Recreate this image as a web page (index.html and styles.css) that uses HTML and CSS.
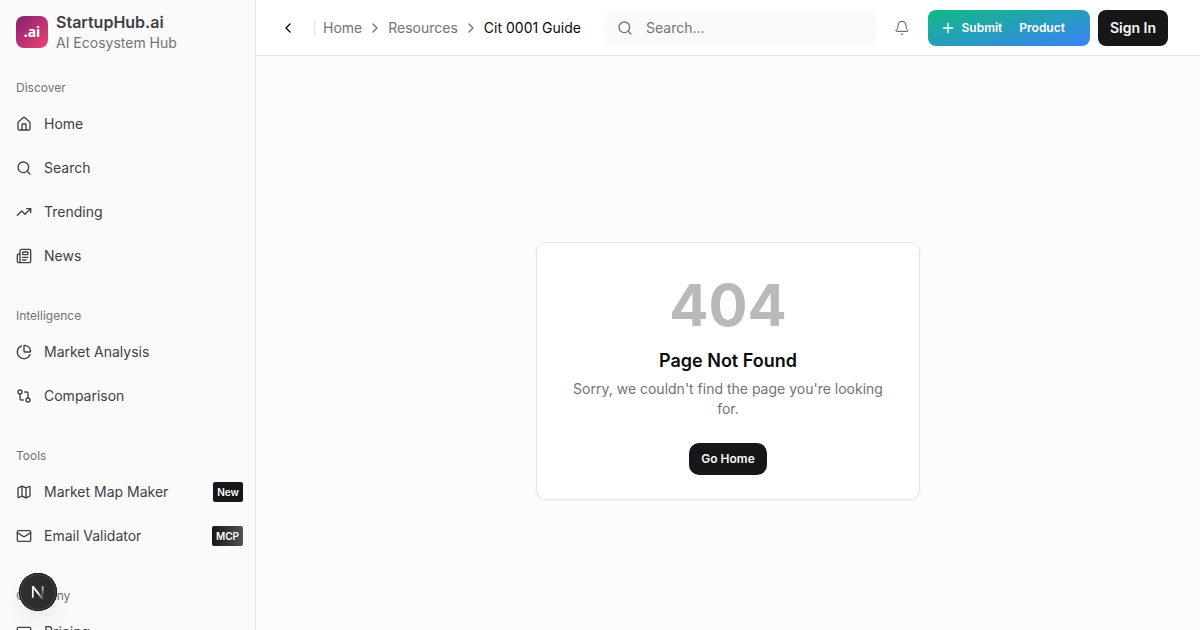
FILE: index.html
```
<!DOCTYPE html>
<html lang="en">
<head>
<meta charset="utf-8">
<meta name="viewport" content="width=device-width, initial-scale=1">
<title>Page Not Found - StartupHub.ai</title>
<link rel="stylesheet" href="styles.css">
</head>
<body>
<div class="shell">
  <aside class="sidebar">
    <a class="brand" href="#">
      <span class="brand-logo">.ai</span>
      <span class="brand-text">
        <span class="brand-name">StartupHub.ai</span>
        <span class="brand-tag">AI Ecosystem Hub</span>
      </span>
    </a>
    <nav class="nav">
      <section class="group">
        <h2 class="group-label">Discover</h2>
        <a class="item" href="#"><svg class="icon" viewBox="0 0 24 24"><path d="M15 21v-8a1 1 0 0 0-1-1h-4a1 1 0 0 0-1 1v8"/><path d="M3 10a2 2 0 0 1 .709-1.528l7-5.999a2 2 0 0 1 2.582 0l7 5.999A2 2 0 0 1 21 10v9a2 2 0 0 1-2 2H5a2 2 0 0 1-2-2z"/></svg>Home</a>
        <a class="item" href="#"><svg class="icon" viewBox="0 0 24 24"><circle cx="11" cy="11" r="8"/><path d="m21 21-4.3-4.3"/></svg>Search</a>
        <a class="item" href="#"><svg class="icon" viewBox="0 0 24 24"><path d="M16 7h6v6"/><path d="m22 7-8.5 8.5-5-5L2 17"/></svg>Trending</a>
        <a class="item" href="#"><svg class="icon" viewBox="0 0 24 24"><path d="M15 18h-5"/><path d="M18 14h-8"/><path d="M4 22h16a2 2 0 0 0 2-2V4a2 2 0 0 0-2-2H8a2 2 0 0 0-2 2v16a2 2 0 0 1-4 0v-9a2 2 0 0 1 2-2h2"/><rect width="8" height="4" x="10" y="6" rx="1"/></svg>News</a>
      </section>
      <section class="group">
        <h2 class="group-label">Intelligence</h2>
        <a class="item" href="#"><svg class="icon" viewBox="0 0 24 24"><path d="M21 12c.552 0 1.005-.449.95-.998a10 10 0 0 0-8.953-8.951c-.55-.055-.998.398-.998.95v8a1 1 0 0 0 1 1z"/><path d="M21.21 15.89A10 10 0 1 1 8 2.83"/></svg>Market Analysis</a>
        <a class="item" href="#"><svg class="icon" viewBox="0 0 24 24"><circle cx="18" cy="18" r="3"/><circle cx="6" cy="6" r="3"/><path d="M13 6h3a2 2 0 0 1 2 2v7"/><path d="M11 18H8a2 2 0 0 1-2-2V9"/></svg>Comparison</a>
      </section>
      <section class="group">
        <h2 class="group-label">Tools</h2>
        <a class="item" href="#"><svg class="icon" viewBox="0 0 24 24"><path d="M14.106 5.553a2 2 0 0 0 1.788 0l3.659-1.83A1 1 0 0 1 21 4.619v12.764a1 1 0 0 1-.553.894l-4.553 2.277a2 2 0 0 1-1.788 0l-4.212-2.106a2 2 0 0 0-1.788 0l-3.659 1.83A1 1 0 0 1 3 19.381V6.618a1 1 0 0 1 .553-.894l4.553-2.277a2 2 0 0 1 1.788 0z"/><path d="M15 5.764v15"/><path d="M9 3.236v15"/></svg>Market Map Maker<span class="tag">New</span></a>
        <a class="item" href="#"><svg class="icon" viewBox="0 0 24 24"><rect width="20" height="16" x="2" y="4" rx="2"/><path d="m22 7-8.991 5.727a2 2 0 0 1-2.009 0L2 7"/></svg>Email Validator<span class="tag tag-fade">MCP</span></a>
      </section>
      <section class="group">
        <h2 class="group-label">Company</h2>
        <a class="item" href="#"><svg class="icon" viewBox="0 0 24 24"><rect width="20" height="14" x="2" y="5" rx="2"/><path d="M2 10h20"/></svg>Pricing</a>
      </section>
    </nav>
  </aside>

  <div class="page">
    <header class="topbar">
      <button class="back" type="button" aria-label="Back"><svg class="icon" viewBox="0 0 24 24"><path d="m15 18-6-6 6-6"/></svg></button>
      <nav class="crumbs" aria-label="Breadcrumb">
        <a href="#">Home</a>
        <svg class="icon" viewBox="0 0 24 24"><path d="m9 18 6-6-6-6"/></svg>
        <a href="#">Resources</a>
        <svg class="icon" viewBox="0 0 24 24"><path d="m9 18 6-6-6-6"/></svg>
        <span class="current">Cit 0001 Guide</span>
      </nav>
      <label class="search">
        <svg class="icon" viewBox="0 0 24 24"><circle cx="11" cy="11" r="8"/><path d="m21 21-4.3-4.3"/></svg>
        <input type="search" placeholder="Search..." aria-label="Search">
      </label>
      <button class="bell" type="button" aria-label="Notifications"><svg class="icon" viewBox="0 0 24 24"><path d="M10.268 21a2 2 0 0 0 3.464 0"/><path d="M3.262 15.326A1 1 0 0 0 4 17h16a1 1 0 0 0 .74-1.673C19.41 13.956 18 12.499 18 8A6 6 0 0 0 6 8c0 4.499-1.411 5.956-2.738 7.326"/></svg></button>
      <div class="actions">
        <button class="submit" type="button"><svg class="icon" viewBox="0 0 24 24"><path d="M5 12h14"/><path d="M12 5v14"/></svg><span>Submit</span><span class="submit-more">Product</span></button>
        <button class="signin" type="button">Sign In</button>
      </div>
    </header>
    <main class="content">
      <div class="card">
        <p class="code">404</p>
        <h1 class="title">Page Not Found</h1>
        <p class="message">Sorry, we couldn't find the page you're looking for.</p>
        <a class="go-home" href="#">Go Home</a>
      </div>
    </main>
  </div>
</div>
<button class="devtools" type="button" aria-label="Open developer tools">
  <svg viewBox="0 0 40 40">
    <defs>
      <linearGradient id="stem" x1="0" y1="13" x2="0" y2="27" gradientUnits="userSpaceOnUse"><stop offset="0.1" stop-color="#fff" stop-opacity="0.8"/><stop offset="0.9" stop-color="#fff" stop-opacity="0"/></linearGradient>
      <linearGradient id="diagonal" x1="20" y1="20" x2="26" y2="28" gradientUnits="userSpaceOnUse"><stop offset="0" stop-color="#fff"/><stop offset="1" stop-color="#fff" stop-opacity="0.1"/></linearGradient>
    </defs>
    <path d="M14.5 26V14" stroke="#fff" stroke-width="1.8"/>
    <path d="M14.5 14 25 27.5" stroke="url(#diagonal)" stroke-width="2"/>
    <rect x="24" y="14" width="1.8" height="12" fill="url(#stem)"/>
  </svg>
</button>
</body>
</html>
```
FILE: styles.css
```
* { box-sizing: border-box; }
body {
  margin: 0;
  font: 14px/20px Inter, "Liberation Sans", sans-serif;
  color: #0a0a0a;
  background: #fcfcfc;
}
a { color: inherit; text-decoration: none; }
button { font: inherit; border: 0; padding: 0; background: none; color: inherit; }
h1, h2, p { margin: 0; }
.shell { display: flex; height: 100vh; overflow: hidden; }
.icon {
  width: 16px;
  height: 16px;
  flex: none;
  fill: none;
  stroke: currentColor;
  stroke-width: 2;
  stroke-linecap: round;
  stroke-linejoin: round;
}

.sidebar {
  flex: none;
  width: 256px;
  overflow: hidden;
  background: #fafafa;
  border-right: 1px solid #e5e5e5;
  color: #3f3f46;
}
.brand { display: flex; align-items: center; gap: 8px; height: 64px; padding: 0 16px; }
.brand-logo {
  width: 32px;
  height: 32px;
  border-radius: 8px;
  background: linear-gradient(135deg, #86206f, #ec4475);
  color: #fff;
  font: 700 14px/32px "Noto Sans", sans-serif;
  text-align: center;
}
.brand-text { display: flex; flex-direction: column; }
.brand-name { font-size: 16px; line-height: 22px; font-weight: 600; }
.brand-tag { color: #737373; }
.nav { display: flex; flex-direction: column; gap: 24px; padding: 8px 12px 8px 16px; }
.group { display: flex; flex-direction: column; gap: 4px; }
.group-label {
  margin-bottom: -4px;
  color: #71717a;
  font-size: 12px;
  line-height: 32px;
  font-weight: 400;
}
.item { display: flex; align-items: center; gap: 12px; height: 40px; }
.tag {
  margin-left: auto;
  padding: 0 4px;
  border-radius: 2px;
  background: #171717;
  color: #fff;
  font-size: 10px;
  font-weight: 600;
}
.tag-fade { background: linear-gradient(90deg, #171717, #525252); }

.page { flex: 1; min-width: 0; }
.topbar {
  display: flex;
  align-items: center;
  height: 56px;
  padding: 0 32px 0 24px;
  background: #fff;
  border-bottom: 1px solid #e5e5e5;
}
.back { display: flex; }
.crumbs {
  display: flex;
  align-items: center;
  gap: 5px;
  margin-left: 18px;
  white-space: nowrap;
  color: #737373;
}
.crumbs::before {
  content: "";
  width: 1px;
  height: 16px;
  margin-right: 3px;
  background: #e5e5e5;
}
.current { color: #0a0a0a; }
.search {
  display: flex;
  flex: 1;
  align-items: center;
  gap: 13px;
  min-width: 0;
  height: 36px;
  margin: 0 17px 0 23px;
  padding: 0 13px;
  border-radius: 10px;
  background: #fafafa;
  color: #737373;
}
.search input {
  flex: 1;
  min-width: 0;
  padding: 0;
  border: 0;
  outline: 0;
  background: none;
  font: inherit;
}
.search input::placeholder { color: #737373; opacity: 1; }
.bell { display: flex; color: #525252; }
.bell .icon { stroke-width: 1.5; }
.actions { display: flex; gap: 8px; margin-left: 18px; }
.submit {
  display: flex;
  align-items: center;
  gap: 6px;
  height: 36px;
  padding: 0 25px 0 12px;
  border-radius: 8px;
  background: linear-gradient(to bottom right, #10b981, #3b82f6);
  color: #fff;
  font-size: 12px;
  font-weight: 600;
}
.submit-more { margin-left: 11px; }
.signin {
  height: 36px;
  padding: 0 12px;
  border-radius: 8px;
  background: #171717;
  color: #fafafa;
  font-weight: 600;
}

.content { display: grid; place-items: center; min-height: 100vh; padding: 16px; }
.card {
  width: 100%;
  max-width: 384px;
  padding: 32px 24px 24px;
  border: 1px solid #e5e5e5;
  border-radius: 10px;
  background: #fff;
  box-shadow: 0 1px 2px rgb(0 0 0 / 5%);
  text-align: center;
}
.code { color: #b9b9b9; font-size: 58px; line-height: 60px; font-weight: 700; }
.title { margin: 12px 0 4px; font-size: 18px; line-height: 28px; font-weight: 600; }
.message { margin-bottom: 24px; color: #737373; }
.go-home {
  display: inline-block;
  vertical-align: top;
  padding: 0 12px;
  border-radius: 10px;
  background: #171717;
  color: #fafafa;
  font-size: 12px;
  line-height: 32px;
  font-weight: 600;
}

.devtools {
  position: fixed;
  left: 19px;
  bottom: 19px;
  width: 38px;
  height: 38px;
  border-radius: 50%;
  background: #2d2d2d;
  box-shadow: inset 0 0 0 1px #171717, inset 0 0 0 2px #4a4a4a, 0 12px 24px -6px rgb(0 0 0 / 12%);
}
.devtools svg { display: block; width: 38px; height: 38px; }
```
